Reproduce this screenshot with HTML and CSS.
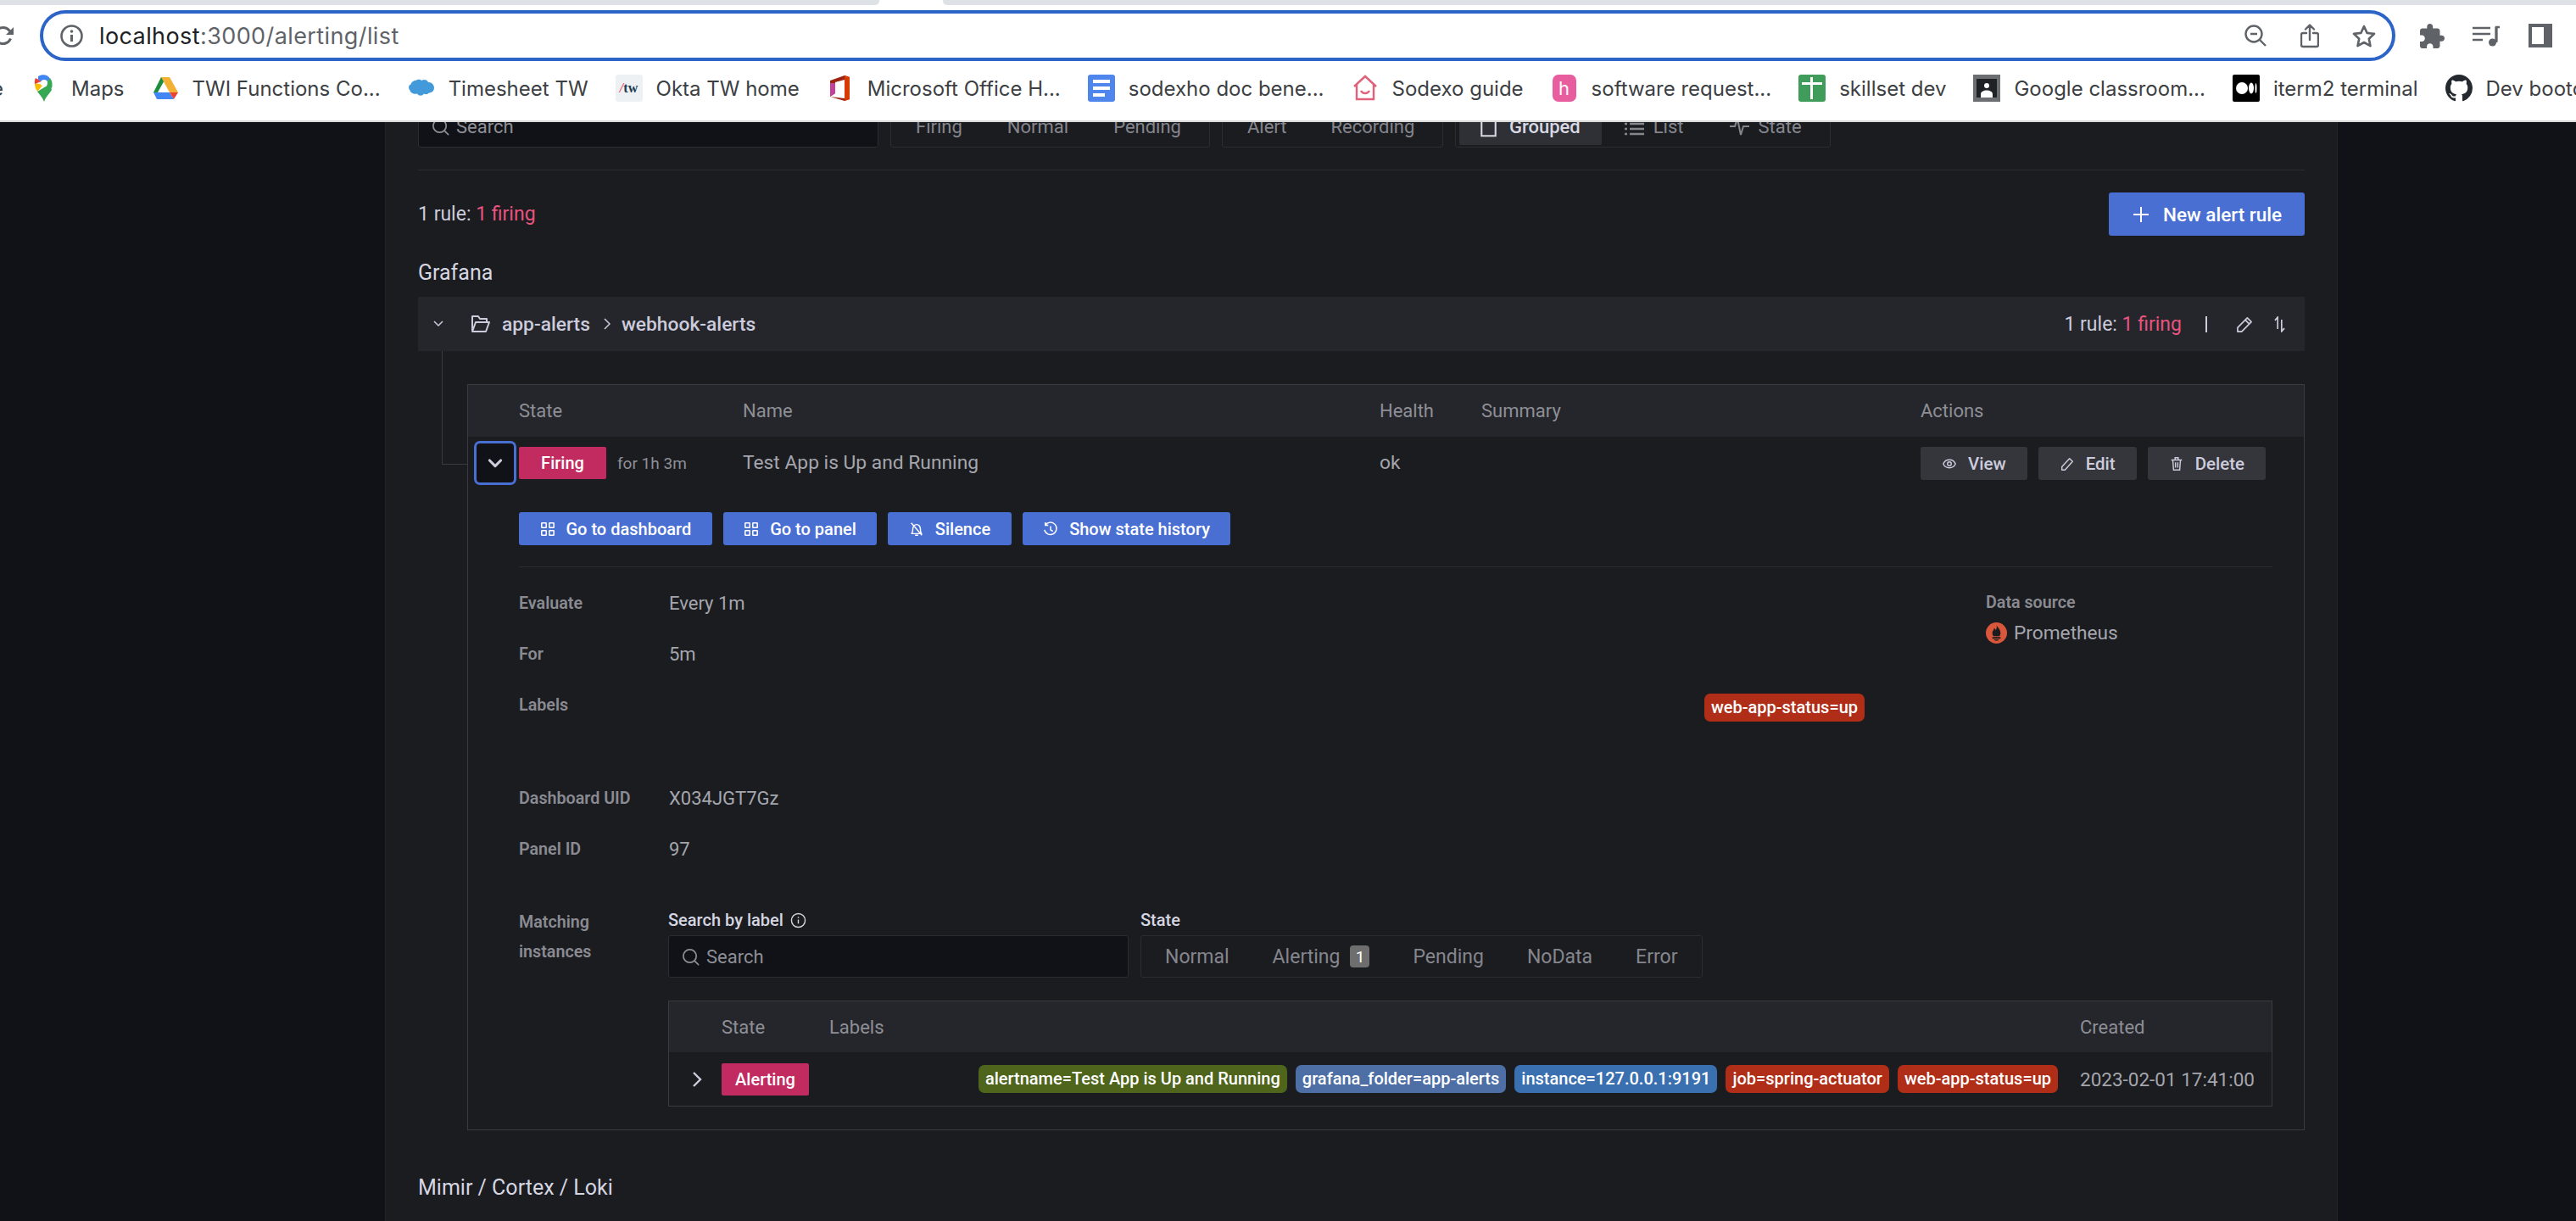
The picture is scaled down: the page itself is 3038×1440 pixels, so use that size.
FILE: index.html
```html
<!DOCTYPE html>
<html lang="en">
<head>
  <meta charset="UTF-8">
  <title>Alert rules - Grafana</title>
  <link rel="stylesheet" href="styles.css">
</head>
<body>
  <svg class="sprite" aria-hidden="true">
    <symbol id="i-apps" viewBox="0 0 20 20" fill="none" stroke="currentColor" stroke-width="1.7">
      <rect x="2" y="2" width="6" height="6" rx=".6"/><rect x="12" y="2" width="6" height="6" rx=".6"/>
      <rect x="2" y="12" width="6" height="6" rx=".6"/><rect x="12" y="12" width="6" height="6" rx=".6"/>
    </symbol>
    <symbol id="i-chev" viewBox="0 0 20 20" fill="none" stroke="currentColor" stroke-width="2.6" stroke-linecap="round" stroke-linejoin="round">
      <path d="M4.5 7.5 10 13l5.5-5.5"/>
    </symbol>
    <symbol id="i-search" viewBox="0 0 24 24" fill="none" stroke="currentColor" stroke-width="1.8" stroke-linecap="round">
      <circle cx="11" cy="11" r="8"/><path d="m17 17 4.5 4.5"/>
    </symbol>
  </svg>

  <header class="browser">
    <div class="tabstrip"><span class="tab-left"></span><span class="tab-right"></span></div>
    <div class="toolbar">
      <svg class="reload" viewBox="0 0 26 26" fill="none" stroke="#5f6368" stroke-width="3">
        <path d="M20.5 16.5A9.5 9.5 0 1 1 19 7l2.5 3"/><path d="M24 3v9h-9z" fill="#5f6368" stroke="none"/>
      </svg>
      <div class="omnibox">
        <svg class="info" viewBox="0 0 27 27" fill="none" stroke="#5f6368" stroke-width="2.6">
          <circle cx="13.5" cy="13.5" r="12"/><path d="M13.5 12v8" stroke-width="3"/><circle cx="13.5" cy="8" r="1.8" fill="#5f6368" stroke="none"/>
        </svg>
        <span class="url"><b>localhost</b>:3000/alerting/list</span>
        <div class="omni-icons">
          <svg class="zoom-out" viewBox="0 0 26 26" fill="none" stroke="#5f6368" stroke-width="2.4">
            <circle cx="11" cy="11" r="9.5"/><path d="M7 11h8M18 18l7 7"/>
          </svg>
          <svg class="share" viewBox="0 0 22 29" fill="none" stroke="#5f6368" stroke-width="2.4" stroke-linecap="round" stroke-linejoin="round">
            <path d="M7 11H3a2 2 0 0 0-2 2v12a2 2 0 0 0 2 2h16a2 2 0 0 0 2-2V13a2 2 0 0 0-2-2h-4M11 19V2M6 6.500 11 1.500l5 5"/>
          </svg>
          <svg class="star" viewBox="0 0 30 28" fill="none" stroke="#5f6368" stroke-width="2.6" stroke-linejoin="round">
            <path d="m15 3 3.600 7.900 8.400 1-6.200 5.800 1.700 8.500L15 22l-7.500 4.200 1.700-8.500L3 11.900l8.400-1z"/>
          </svg>
        </div>
      </div>
      <svg class="puzzle" viewBox="2 1 21 21" fill="#5f6368">
        <path d="M20.500 11H19V7c0-1.100-.9-2-2-2h-4V3.500C13 2.120 11.880 1 10.500 1S8 2.120 8 3.500V5H4c-1.100 0-1.990.9-1.990 2v3.800H3.500c1.490 0 2.700 1.210 2.700 2.700s-1.210 2.700-2.700 2.700H2V20c0 1.100.9 2 2 2h3.800v-1.500c0-1.490 1.210-2.700 2.700-2.700 1.490 0 2.700 1.210 2.700 2.700V22H17c1.100 0 2-.9 2-2v-4h1.500c1.380 0 2.500-1.120 2.500-2.500S21.880 11 20.500 11z"/>
      </svg>
      <svg class="media" viewBox="0 0 32 25" fill="none" stroke="#5f6368" stroke-width="2.6">
        <path d="M0 3h21M0 10h21M0 17h12M28 18V2h4"/><circle cx="23.500" cy="20" r="4.500" fill="#5f6368" stroke="none"/><path d="M28 2v18" stroke-width="3"/>
      </svg>
      <svg class="panel" viewBox="0 0 28 28"><path fill="#5f6368" d="M0 0h28v28H0z"/><path fill="#fff" d="M4 4h14v20H4z"/></svg>
    </div>
    <nav class="bookmarks">
      <span class="bm-cut">e</span>
      <a class="bm">
        <svg class="bm-icon" viewBox="0 0 32 32">
          <path fill="#34a853" d="M16 32c-2-5-4-7-8-12l15-9 2 7c-3 5-7 8-9 14z"/>
          <path fill="#fbbc04" d="M5 10c-.5 4 1.500 7 3 10l7-8z"/>
          <path fill="#ea4335" d="M6 4c-1 2-1.500 4-1 7l8-3z"/>
          <path fill="#4285f4" d="M9 2c5-3 12-2 14 3l-6 6-8-5z"/>
          <path fill="#34a853" d="M23 4c3 4 3 8 2 12l-8-4z"/>
          <circle cx="16" cy="10" r="4" fill="#fff"/>
        </svg>Maps</a>
      <a class="bm">
        <svg class="bm-icon" viewBox="0 0 32 32">
          <path fill="#1e8e3e" d="M11 3h6L7 21l-5 0z"/><path fill="#f2b134" d="M11 3h10l10 18H21z"/>
          <path fill="#4285f4" d="m2 21 4 8h20l-5-8z"/><path fill="#ea4335" d="m21 21 5 8 5-8z"/>
        </svg>TWI Functions Co...</a>
      <a class="bm">
        <svg class="bm-icon" viewBox="0 0 32 32"><path fill="#429adb" d="M9 7c3-2 6-1.500 7 0 3-2 7-1 8 2 4-.5 7 3 7 6.500S28 22 25 21.500c-2 2-4 2-6 1-2 3-6 3-8 0-4 1-8-1-8.500-4C0 16 1 12 3.500 11.500 4 9 7 7 9 7z"/></svg>Timesheet TW</a>
      <a class="bm">
        <span class="bm-icon fav-tw"><i>/</i>tw</span>Okta TW home</a>
      <a class="bm">
        <svg class="bm-icon" viewBox="0 0 32 32">
          <path fill="#9c2412" d="M4 7 21 1l6 2v26l-6 2-17-5 17 2V6L10 9v13l-6 4z"/>
          <path fill="#d83b01" d="M21 1l6 2v26l-6 2z"/><path fill="#c2429b" d="M4 10h6v12l-6 4z"/>
        </svg>Microsoft Office H...</a>
      <a class="bm">
        <svg class="bm-icon" viewBox="0 0 32 32">
          <rect width="32" height="32" rx="3" fill="#4e86ee"/><path fill="#fff" d="M6 6h20v4H6zM6 14h20v4H6zM6 22h14v4H6z"/>
        </svg>sodexho doc bene...</a>
      <a class="bm">
        <svg class="bm-icon" viewBox="0 0 32 32" fill="none" stroke="#e2607a" stroke-width="2.400">
          <path d="M3 14 16 2l13 12M6 12v17h20V12"/><path d="M11 19c2 4 8 4 10 0"/>
        </svg>Sodexo guide</a>
      <a class="bm">
        <span class="bm-icon fav-h">h</span>software request...</a>
      <a class="bm">
        <svg class="bm-icon" viewBox="0 0 32 32"><rect width="32" height="32" rx="3" fill="#3f9c5a"/><path fill="#fff" d="M4 9h24v3H4zM14 3h3v26h-3z"/></svg>skillset dev</a>
      <a class="bm">
        <svg class="bm-icon" viewBox="0 0 32 32"><path fill="#6c6e72" d="M0 0h32v32H0z"/><path fill="#202124" d="M4 5h24v22H4z"/><circle cx="16" cy="13" r="3" fill="#fff"/><path fill="#fff" d="M9 27v-4c0-6 14-6 14 0v4z"/></svg>Google classroom...</a>
      <a class="bm">
        <svg class="bm-icon" viewBox="0 0 32 32"><rect width="32" height="32" rx="2" fill="#000"/><ellipse cx="11" cy="16" rx="7" ry="7" fill="#fff"/><ellipse cx="22" cy="16" rx="3" ry="6.500" fill="#fff"/><ellipse cx="27.500" cy="16" rx="1" ry="6" fill="#fff"/></svg>iterm2 terminal</a>
      <a class="bm">
        <svg class="bm-icon" viewBox="0 0 16 16"><path fill="#24292f" d="M8 0C3.580 0 0 3.580 0 8c0 3.540 2.290 6.530 5.470 7.590.4.07.55-.17.55-.38 0-.19-.01-.82-.01-1.490-2.010.37-2.530-.49-2.690-.94-.09-.23-.48-.94-.82-1.130-.28-.15-.68-.52-.01-.53.63-.01 1.080.58 1.230.82.72 1.210 1.870.87 2.330.66.07-.52.28-.87.51-1.070-1.780-.2-3.640-.89-3.640-3.950 0-.87.31-1.590.82-2.150-.08-.2-.36-1.020.08-2.120 0 0 .67-.21 2.200.82.64-.18 1.320-.27 2-.27.68 0 1.360.09 2 .27 1.530-1.040 2.200-.82 2.200-.82.44 1.100.16 1.920.08 2.120.51.56.82 1.270.82 2.150 0 3.070-1.870 3.750-3.650 3.950.29.25.54.73.54 1.480 0 1.070-.01 1.930-.01 2.200 0 .21.15.46.55.38A8.013 8.013 0 0 0 16 8c0-4.420-3.580-8-8-8z"/></svg>Dev bootcamp</a>
    </nav>
  </header>

  <div class="page">
    <aside class="gutter-left"></aside>
    <main class="main">
      <div class="filters">
        <div class="search-box filter-search">
          <svg class="ic-search"><use href="#i-search"/></svg>Search
        </div>
        <div class="radio-group rg-state"><span>Firing</span><span>Normal</span><span>Pending</span></div>
        <div class="radio-group rg-type"><span>Alert</span><span>Recording</span></div>
        <div class="radio-group rg-view">
          <span class="active">
            <svg class="ic-view" viewBox="0 0 23 30" fill="none" stroke="currentColor" stroke-width="2.400"><path d="M2 2h13l6 6v20H2z"/></svg>Grouped</span>
          <span>
            <svg class="ic-view" viewBox="0 0 23 24" fill="none" stroke="currentColor" stroke-width="2.400"><path d="M0 3h3M6 3h17M0 9h3M6 9h17M0 15h3M6 15h17M0 21h3M6 21h17"/></svg>List</span>
          <span>
            <svg class="ic-view" viewBox="0 0 23 24" fill="none" stroke="currentColor" stroke-width="2"><path d="M0 12h6l3-9 4 19 3-10h7"/></svg>State</span>
        </div>
      </div>
      <hr class="rule">
      <div class="summary">
        <span>1 rule: <em>1 firing</em></span>
        <button class="btn-new">
          <svg class="ic-plus" viewBox="0 0 20 20" stroke="currentColor" stroke-width="2"><path d="M10 1v18M1 10h18"/></svg>New alert rule
        </button>
      </div>

      <h2 class="source-title">Grafana</h2>

      <div class="group-head">
        <svg class="ic-group-chev" viewBox="0 0 12 8" fill="none" stroke="currentColor" stroke-width="1.500"><path d="m1 1 5 5 5-5"/></svg>
        <svg class="ic-folder" viewBox="0 0 23 24" fill="none" stroke="currentColor" stroke-width="2" stroke-linejoin="round"><path d="M2 20V3h7l2 3h8v4M2 21l4-11h16l-4 11z"/></svg>
        <span class="crumb">app-alerts</span>
        <svg class="ic-crumb" viewBox="0 0 8 14" fill="none" stroke="currentColor" stroke-width="1.500"><path d="m1 1 6 6-6 6"/></svg>
        <span class="crumb">webhook-alerts</span>
        <div class="group-meta">
          <span>1 rule: <em>1 firing</em></span>
          <i class="pipe"></i>
          <svg class="ic-pen" viewBox="0 0 20 20" fill="none" stroke="currentColor" stroke-width="1.800" stroke-linejoin="round"><path d="M1 19v-5L13 2l5 5L6 19zM10.500 4.500l5 5"/></svg>
          <svg class="ic-sort" viewBox="0 0 14 20" fill="none" stroke="currentColor" stroke-width="1.800"><path d="M1 5l3.500-4v15M13 15l-3.500 4V4"/></svg>
        </div>
      </div>

      <section class="rule-table">
        <div class="rule-grid rule-head">
          <span></span><span>State</span><span>Name</span><span>Health</span><span>Summary</span><span>Actions</span>
        </div>
        <div class="rule-grid rule-row">
          <button class="expander"><svg class="ic-expander"><use href="#i-chev"/></svg></button>
          <div class="state-cell"><span class="badge">Firing</span><small>for 1h 3m</small></div>
          <span class="cell-text">Test App is Up and Running</span>
          <span class="cell-text">ok</span>
          <span></span>
          <div class="row-actions">
            <button class="btn-sec">
              <svg class="ic-btn" viewBox="0 0 20 20" fill="none" stroke="currentColor" stroke-width="1.600"><path d="M2 10c3-7 13-7 16 0-3 7-13 7-16 0z"/><circle cx="10" cy="10" r="2.500"/></svg>View</button>
            <button class="btn-sec">
              <svg class="ic-btn" viewBox="0 0 20 20" fill="none" stroke="currentColor" stroke-width="1.600" stroke-linejoin="round"><path d="M3 18v-4L13 3l4 4L7 18z"/></svg>Edit</button>
            <button class="btn-sec">
              <svg class="ic-btn" viewBox="0 0 20 20" fill="none" stroke="currentColor" stroke-width="1.600"><path d="M3 5h14M8 5V2h4v3M5 5l1 13h8l1-13M8.500 8v7M11.500 8v7"/></svg>Delete</button>
          </div>
        </div>

        <div class="rule-detail">
          <div class="detail-actions">
            <button class="btn-pri"><svg class="ic-btn"><use href="#i-apps"/></svg>Go to dashboard</button>
            <button class="btn-pri"><svg class="ic-btn"><use href="#i-apps"/></svg>Go to panel</button>
            <button class="btn-pri">
              <svg class="ic-btn" viewBox="0 0 20 20" fill="none" stroke="currentColor" stroke-width="1.600"><path d="M3 16c2-1 2-3 2-6 0-3 2-6 5-6s5 3 5 6c0 3 0 5 2 6zM8 18h4M3 2l14 16"/></svg>Silence</button>
            <button class="btn-pri">
              <svg class="ic-btn" viewBox="0 0 20 20" fill="none" stroke="currentColor" stroke-width="1.600"><path d="M3 5a8 8 0 1 1-1 6M3 1v4h4M10 6v5l3 2"/></svg>Show state history</button>
          </div>
          <hr class="detail-rule">
          <div class="detail-body">
            <div class="detail-main">
              <div class="kv"><label>Evaluate</label><span>Every 1m</span></div>
              <div class="kv"><label>For</label><span>5m</span></div>
              <div class="kv kv-labels"><label>Labels</label><div class="kv-tags"><span class="tag tag-red">web-app-status=up</span></div></div>
              <div class="kv"><label>Dashboard UID</label><span>X034JGT7Gz</span></div>
              <div class="kv"><label>Panel ID</label><span>97</span></div>
            </div>
            <div class="data-source">
              <label>Data source</label>
              <div class="ds-name">
                <svg class="ic-prom" viewBox="0 0 26 26">
                  <circle cx="13" cy="13" r="13" fill="#d9573a"/>
                  <path fill="#1b1c20" d="M13 3c1 3 5 5 5 10 0 2-1 4-2 4H10c-1 0-2-2-2-4 0-3 2-3 2-6 2 1 2 2 2 3 1-2 2-4 1-7zM8 18h10v2H8zM10 21h6c0 2-6 2-6 0z"/>
                </svg>Prometheus</div>
            </div>
          </div>

          <div class="instances">
            <div class="instances-label">Matching<br>instances</div>
            <div class="instances-main">
              <div class="inst-filters">
                <div class="inst-search">
                  <div class="field-label">Search by label
                    <svg class="ic-info" viewBox="0 0 20 20" fill="none" stroke="currentColor" stroke-width="1.500"><circle cx="10" cy="10" r="8.500"/><path d="M10 9v5M10 5.500v1.500"/></svg>
                  </div>
                  <div class="search-box">
                    <svg class="ic-search"><use href="#i-search"/></svg>Search
                  </div>
                </div>
                <div class="inst-state">
                  <div class="field-label">State</div>
                  <div class="radio-group rg-inst">
                    <span>Normal</span><span>Alerting<b class="count">1</b></span><span>Pending</span><span>NoData</span><span>Error</span>
                  </div>
                </div>
              </div>
              <div class="inst-table">
                <div class="inst-grid inst-head"><span></span><span>State</span><span>Labels</span><span>Created</span></div>
                <div class="inst-grid inst-row">
                  <svg class="ic-inst-chev" viewBox="0 0 12 20" fill="none" stroke="currentColor" stroke-width="2.400"><path d="m2 2 8 8-8 8"/></svg>
                  <span class="badge">Alerting</span>
                  <div class="inst-tags">
                    <span class="tag tag-green">alertname=Test App is Up and Running</span>
                    <span class="tag tag-slate">grafana_folder=app-alerts</span>
                    <span class="tag tag-blue">instance=127.0.0.1:9191</span>
                    <span class="tag tag-red">job=spring-actuator</span>
                    <span class="tag tag-red">web-app-status=up</span>
                  </div>
                  <span class="inst-date">2023-02-01 17:41:00</span>
                </div>
              </div>
            </div>
          </div>
        </div>
      </section>

      <h2 class="source-title source-next">Mimir / Cortex / Loki</h2>
      <p class="no-rules">No rules found.</p>
    </main>
    <aside class="gutter-right"></aside>
  </div>
</body>
</html>
```

FILE: styles.css
```css
* {
  box-sizing: border-box;
}
html, body {
  margin: 0;
  height: 1440px;
  overflow: hidden;
}
body {
  display: flex;
  flex-direction: column;
  font-family: Roboto, "Liberation Sans", sans-serif;
  background-color: #111217;
  color: #ccccdc;
}
.sprite {
  display: none;
}
button {
  font-family: inherit;
  border: none;
}
hr {
  margin: 0;
  border: none;
}
em {
  font-style: normal;
  color: #e8537f;
}

/* browser chrome */
.browser {
  flex: none;
  height: 144px;
  background-color: #fff;
  border-bottom: 2px solid #d9d9d9;
  font-family: Inter, "Liberation Sans", sans-serif;
}
.tabstrip {
  display: flex;
  height: 6px;
  gap: 75px;
}
.tab-left {
  width: 1037px;
  background-color: #dee1e6;
  border-bottom-right-radius: 5px;
}
.tab-right {
  flex: 1;
  background-color: #dee1e6;
  border-bottom-left-radius: 5px;
}
.toolbar {
  display: flex;
  align-items: center;
  height: 66px;
  padding-top: 6px;
}
.reload {
  width: 26px;
  height: 26px;
  margin-left: -8px;
  margin-right: 29px;
}
.omnibox {
  display: flex;
  align-items: center;
  width: 2778px;
  height: 60px;
  padding: 0 18px 0 20px;
  border: 4px solid #2d64c8;
  border-radius: 30px;
}
.info {
  width: 27px;
  height: 27px;
  margin-right: 19px;
}
.url {
  font-size: 27px;
  color: #5f6368;
  letter-spacing: .4px;
}
.url b {
  font-weight: 400;
  color: #202124;
}
.omni-icons {
  display: flex;
  align-items: center;
  margin-left: auto;
}
.zoom-out {
  width: 26px;
  height: 26px;
  margin-right: 40px;
}
.share {
  width: 22px;
  height: 29px;
  margin-right: 38px;
}
.star {
  width: 30px;
  height: 28px;
}
.puzzle {
  width: 29px;
  height: 29px;
  margin-left: 29px;
}
.media {
  width: 32px;
  height: 25px;
  margin-left: 33px;
}
.panel {
  width: 28px;
  height: 28px;
  margin-left: 34px;
}
.bookmarks {
  display: flex;
  align-items: center;
  gap: 32px;
  height: 70px;
  padding-bottom: 6px;
  font-size: 24px;
  color: #3c4043;
  white-space: nowrap;
}
.bm-cut {
  margin-left: -10px;
}
.bm {
  display: flex;
  align-items: center;
  flex: none;
}
.bm-icon {
  flex: none;
  width: 32px;
  height: 32px;
  margin-right: 16px;
}
.fav-tw {
  display: flex;
  align-items: center;
  justify-content: center;
  background-color: #eef1f4;
  border-radius: 3px;
  font-family: "Liberation Serif", serif;
  font-size: 16px;
  font-weight: 700;
  color: #1d3b53;
}
.fav-tw i {
  color: #e2536a;
}
.fav-h {
  display: flex;
  align-items: center;
  justify-content: center;
  width: 28px;
  margin-left: 2px;
  margin-right: 18px;
  background-color: #e85d9e;
  border-radius: 7px;
  font-size: 22px;
  color: #fff;
}

/* page frame */
.page {
  flex: 1;
  display: flex;
  min-height: 0;
}
.gutter-left {
  flex: none;
  width: 454px;
}
.gutter-right {
  flex: 1;
}
.main {
  flex: none;
  width: 2303px;
  padding: 0 38px;
  overflow: hidden;
  background-color: #1b1c20;
  border-left: 1px solid #222327;
  border-right: 1px solid #222327;
  font-size: 23px;
}

/* filters */
.filters {
  display: flex;
  align-items: flex-end;
  gap: 14px;
  height: 30px;
}
.search-box {
  flex: none;
  display: flex;
  align-items: center;
  height: 50px;
  padding-left: 14px;
  background-color: #111217;
  border: 1px solid #2c2d32;
  border-radius: 3px;
  color: #8e8f96;
  font-size: 22px;
}
.filter-search {
  width: 543px;
}
.ic-search {
  width: 23px;
  height: 23px;
  margin-right: 7px;
}
.radio-group {
  flex: none;
  display: flex;
  align-items: center;
  height: 50px;
  border: 1px solid #2c2d32;
  border-radius: 3px;
  color: #85868d;
  font-size: 22px;
}
.radio-group span {
  display: flex;
  align-items: center;
}
.rg-state {
  width: 377px;
  padding-left: 29px;
  gap: 53px;
}
.rg-type {
  width: 261px;
  padding-left: 29px;
  gap: 52px;
}
.rg-view {
  width: 443px;
  padding: 4px;
}
.rg-view span {
  height: 40px;
  padding: 0 27px;
}
.rg-view .active {
  height: 44px;
  background-color: #2f3036;
  border-radius: 2px;
  color: #d8d9e3;
  font-weight: 500;
  padding: 0 25px 0 23px;
}
.ic-view {
  width: 23px;
  height: 26px;
  margin-right: 11px;
}
.rg-view .active .ic-view {
  margin-right: 13px;
}

.rule {
  margin-top: 26px;
  height: 1px;
  background-color: #2c2d32;
}
.summary {
  display: flex;
  align-items: center;
  justify-content: space-between;
  margin-top: 26px;
  height: 51px;
}
.btn-new {
  display: flex;
  align-items: center;
  width: 231px;
  height: 51px;
  padding-left: 28px;
  background-color: #4a6fd3;
  border-radius: 3px;
  color: #fff;
  font-size: 22.500px;
  font-weight: 500;
}
.ic-plus {
  width: 20px;
  height: 20px;
  margin-right: 16px;
}
.source-title {
  margin: 27px 0 11px;
  height: 34px;
  font-size: 25px;
  font-weight: 400;
  line-height: 34px;
  color: #d5d6e0;
}

/* rule group header */
.group-head {
  display: flex;
  align-items: center;
  height: 64px;
  padding-left: 18px;
  padding-right: 23px;
  background-color: #25262b;
}
.ic-group-chev {
  width: 12px;
  height: 8px;
  margin-right: 32px;
}
.ic-folder {
  width: 23px;
  height: 24px;
  margin-right: 14px;
}
.crumb {
  font-size: 22.800px;
  font-weight: 500;
}
.ic-crumb {
  width: 8px;
  height: 14px;
  margin: 0 13px 0 16px;
}
.group-meta {
  display: flex;
  align-items: center;
  margin-left: auto;
}
.pipe {
  width: 2px;
  height: 19px;
  margin: 0 35px 0 28px;
  background-color: #ccccdc;
}
.ic-pen {
  width: 19px;
  height: 19px;
  margin-right: 25px;
}
.ic-sort {
  width: 13px;
  height: 19px;
}

/* rule table */
.rule-table {
  position: relative;
  margin: 39px 0 0 58px;
  border: 1px solid #3a3b40;
}
.rule-table::before {
  content: "";
  position: absolute;
  left: -31px;
  top: -40px;
  width: 30px;
  height: 133px;
  border-left: 1px solid #3a3b40;
  border-bottom: 1px solid #3a3b40;
}
.rule-grid {
  display: grid;
  grid-template-columns: 60px 264px 751px 120px 518px 1fr;
}
.rule-head {
  align-items: center;
  height: 61px;
  background-color: #25262b;
  color: #8e8f96;
  font-size: 22px;
}
.rule-row {
  height: 89px;
  padding-top: 5px;
  align-items: start;
}
.expander {
  display: flex;
  align-items: center;
  justify-content: center;
  width: 50px;
  height: 52px;
  margin-left: 7px;
  padding: 0;
  background-color: #111217;
  border: 3px solid #4a6fd3;
  border-radius: 7px;
  color: #ccccdc;
}
.ic-expander {
  width: 24px;
  height: 24px;
}
.state-cell {
  display: flex;
  align-items: center;
  margin-top: 7px;
}
.state-cell small {
  margin-left: 13px;
  font-size: 19px;
  color: #8e8f96;
}
.badge {
  display: flex;
  align-items: center;
  justify-content: center;
  width: 103px;
  height: 38px;
  background-color: #c12b60;
  border-radius: 2px;
  color: #fff;
  font-size: 20px;
  font-weight: 500;
}
.cell-text {
  margin-top: 11px;
  line-height: 30px;
  color: #a5a6ad;
  font-size: 22.800px;
}
.row-actions {
  display: flex;
  gap: 13px;
  margin-top: 7px;
}
.btn-sec, .btn-pri {
  display: flex;
  align-items: center;
  flex: none;
  height: 39px;
  padding: 0 24.500px;
  border-radius: 3px;
  font-size: 20px;
  font-weight: 500;
  white-space: nowrap;
}
.btn-sec {
  padding: 0 25px;
  background-color: #35363c;
  color: #ccccdc;
  font-size: 20.500px;
}
.btn-pri {
  background-color: #4a6fd3;
  color: #fff;
}
.ic-btn {
  width: 18px;
  height: 18px;
  margin-right: 13px;
}

/* rule details */
.rule-detail {
  padding: 0 37px 27px 60px;
}
.detail-actions {
  display: flex;
  gap: 13px;
}
.detail-rule {
  height: 1px;
  margin-top: 25px;
  background-color: #2c2d32;
}
.detail-body {
  display: grid;
  grid-template-columns: 1730px 1fr;
  margin-top: 13px;
}
.kv {
  display: grid;
  grid-template-columns: 177px 1fr;
  height: 60px;
  line-height: 60px;
  color: #a5a6ad;
  font-size: 22px;
}
.kv label, .instances-label {
  font-size: 19.700px;
  font-weight: 600;
  color: #8a8b92;
}
.kv-labels {
  height: 110px;
}
.kv-tags {
  display: flex;
  justify-content: flex-end;
  padding: 16px 143px 0 0;
}
.tag {
  display: flex;
  align-items: center;
  flex: none;
  height: 33px;
  padding: 0 8px;
  border-radius: 7px;
  color: #fff;
  font-size: 20px;
  font-weight: 500;
  line-height: 33px;
  white-space: nowrap;
}
.tag-red {
  background-color: #b02e18;
}
.tag-green {
  background-color: #4e651b;
}
.tag-slate {
  background-color: #4d6fa5;
}
.tag-blue {
  background-color: #3a6fb0;
}
.data-source {
  padding-top: 16px;
}
.data-source label {
  display: block;
  font-size: 19.700px;
  font-weight: 600;
  color: #8a8b92;
  line-height: 26px;
}
.ds-name {
  display: flex;
  align-items: center;
  margin-top: 9px;
  color: #a5a6ad;
  font-size: 22.700px;
}
.ic-prom {
  width: 25px;
  height: 25px;
  margin-right: 8px;
}

/* matching instances */
.instances {
  display: grid;
  grid-template-columns: 176px 1fr;
  margin-top: 37px;
}
.instances-label {
  padding-top: 1px;
  line-height: 35px;
}
.inst-filters {
  display: flex;
  gap: 14px;
}
.field-label {
  display: flex;
  align-items: center;
  height: 34px;
  padding-bottom: 2px;
  font-size: 20px;
  font-weight: 500;
  color: #d5d6e0;
}
.ic-info {
  width: 19px;
  height: 19px;
  margin-left: 8px;
}
.inst-search .search-box {
  width: 543px;
}
.rg-inst {
  width: 663px;
  padding-left: 28px;
  color: #85868d;
  font-size: 23px;
}
.rg-inst span {
  margin-right: 51px;
}
.count {
  display: flex;
  align-items: center;
  justify-content: center;
  width: 23px;
  height: 26px;
  margin-left: 12px;
  background-color: #6e6e6e;
  border-radius: 4px;
  color: #fff;
  font-size: 19px;
  font-weight: 400;
}
.inst-table {
  margin-top: 27px;
  border: 1px solid #3a3b40;
}
.inst-grid {
  display: grid;
  grid-template-columns: 62px 127px 1fr 226px;
  align-items: center;
}
.inst-head {
  height: 60px;
  background-color: #25262b;
  color: #8e8f96;
  font-size: 22px;
}
.inst-row {
  height: 63px;
}
.ic-inst-chev {
  width: 12px;
  height: 20px;
  margin-left: 27px;
  color: #ccccdc;
}
.inst-tags {
  display: flex;
  justify-content: flex-end;
  gap: 10px;
  padding-right: 26px;
}
.inst-date {
  color: #a5a6ad;
  font-size: 22.500px;
  white-space: nowrap;
}

.source-next {
  margin: 51px 0 0;
}
.no-rules {
  margin: 21px 0 0;
  font-size: 23px;
  color: #ccccdc;
}
```
